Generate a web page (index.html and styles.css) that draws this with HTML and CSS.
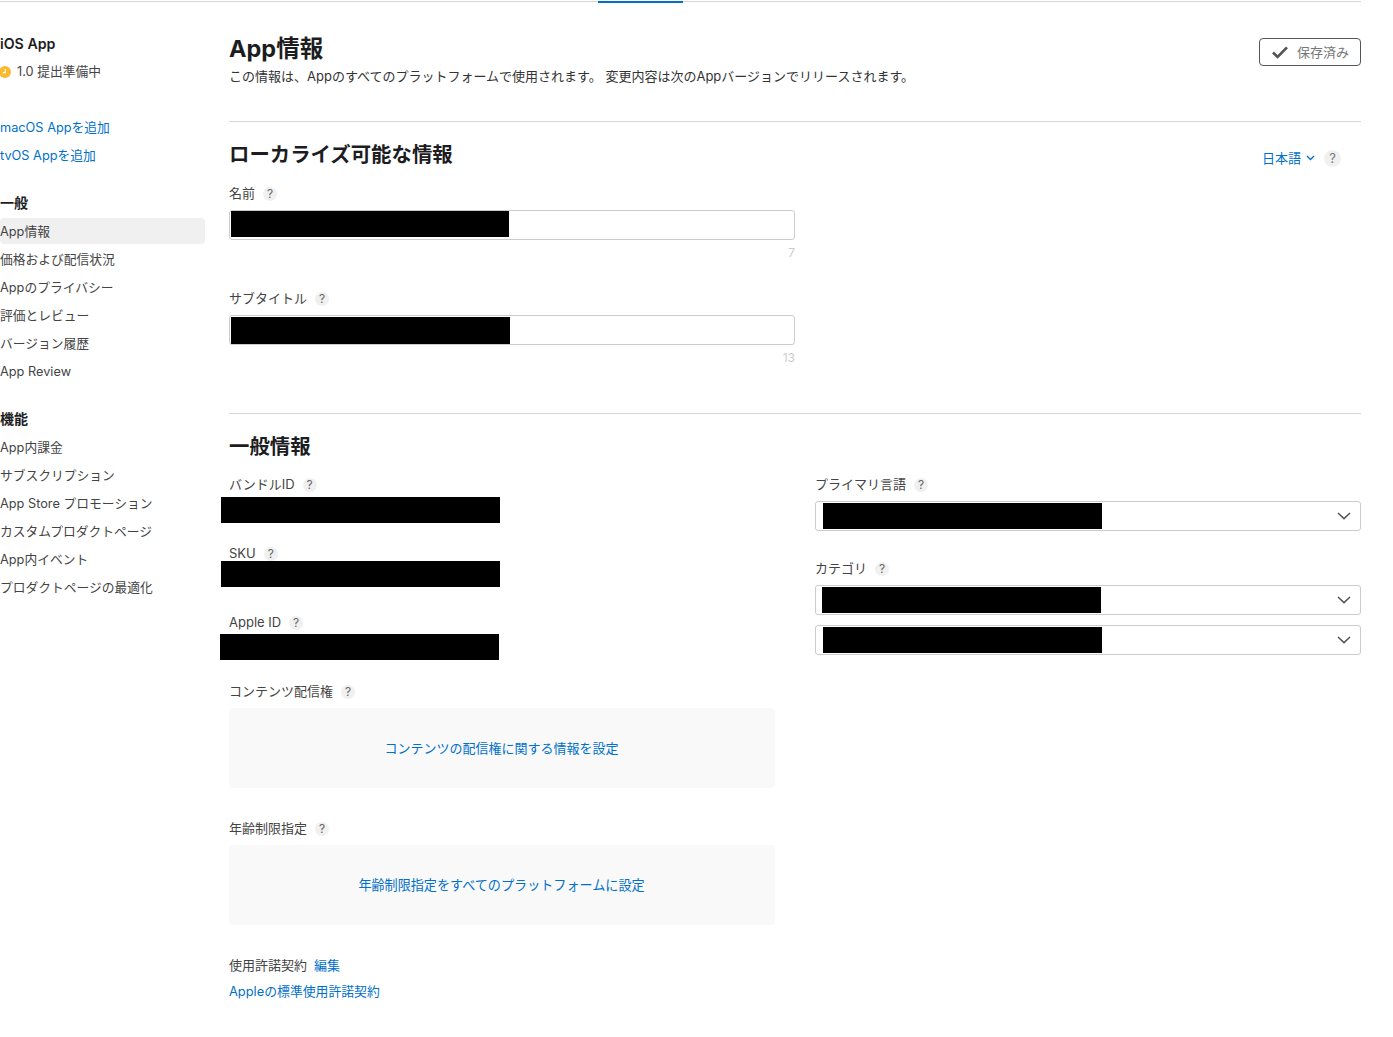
FILE: index.html
```html
<!DOCTYPE html>
<html lang="ja">
<head>
<meta charset="utf-8">
<title>App情報</title>
<link rel="stylesheet" href="styles.css">
</head>
<body>
<div class="topbar"><span class="tab-active"></span></div>
<div class="page">
  <aside class="sidebar">
    <div class="app-title">iOS App</div>
    <div class="app-status">
      <svg class="status-icon" width="12" height="12" viewBox="0 0 11 11"><circle cx="5.5" cy="5.5" r="5.5" fill="#fdb92e"/><path d="M5.8 2.8v3.2H3.4" fill="none" stroke="#fff" stroke-width="1.1"/></svg>
      <span>1.0 提出準備中</span>
    </div>
    <a class="side-add first" href="#">macOS Appを追加</a>
    <a class="side-add" href="#">tvOS Appを追加</a>
    <div class="side-head">一般</div>
    <a class="side-item active" href="#">App情報</a>
    <a class="side-item" href="#">価格および配信状況</a>
    <a class="side-item" href="#">Appのプライバシー</a>
    <a class="side-item" href="#">評価とレビュー</a>
    <a class="side-item" href="#">バージョン履歴</a>
    <a class="side-item" href="#">App Review</a>
    <div class="side-head next">機能</div>
    <a class="side-item" href="#">App内課金</a>
    <a class="side-item" href="#">サブスクリプション</a>
    <a class="side-item" href="#">App Store プロモーション</a>
    <a class="side-item" href="#">カスタムプロダクトページ</a>
    <a class="side-item" href="#">App内イベント</a>
    <a class="side-item" href="#">プロダクトページの最適化</a>
  </aside>
  <main class="main">
    <header class="page-head">
      <div>
        <h1>App情報</h1>
        <p class="desc">この情報は、Appのすべてのプラットフォームで使用されます。 変更内容は次のAppバージョンでリリースされます。</p>
      </div>
      <button class="saved">
        <svg width="18" height="14" viewBox="0 0 18 14"><path d="M2 7.5l4.6 4.4L16 2.4" fill="none" stroke="#555" stroke-width="2.7"/></svg>
        <span>保存済み</span>
      </button>
    </header>

    <section class="localized">
      <div class="section-head">
        <h2>ローカライズ可能な情報</h2>
        <div class="lang">
          <a href="#" class="lang-link">日本語</a>
          <svg width="9" height="6" viewBox="0 0 9 6"><path d="M1 1l3.5 3.5L8 1" fill="none" stroke="#0070c9" stroke-width="1.3"/></svg>
          <span class="help big">?</span>
        </div>
      </div>
      <div class="label name-label">名前<span class="help">?</span></div>
      <div class="input"><span class="mask mask-name"></span></div>
      <div class="count">7</div>
      <div class="label sub-label">サブタイトル<span class="help">?</span></div>
      <div class="input"><span class="mask mask-sub"></span></div>
      <div class="count">13</div>
    </section>

    <section class="general">
      <h2>一般情報</h2>
      <div class="columns">
        <div class="col-left">
          <div class="label">バンドルID<span class="help">?</span></div>
          <div class="block block-bundle"></div>
          <div class="label sku-label">SKU<span class="help">?</span></div>
          <div class="block block-sku"></div>
          <div class="label appleid-label">Apple ID<span class="help">?</span></div>
          <div class="block block-apple"></div>
          <div class="label rights-label">コンテンツ配信権<span class="help">?</span></div>
          <div class="panel"><a href="#" class="rights-link">コンテンツの配信権に関する情報を設定</a></div>
          <div class="label age-label">年齢制限指定<span class="help">?</span></div>
          <div class="panel"><a href="#" class="age-link">年齢制限指定をすべてのプラットフォームに設定</a></div>
          <div class="label license-label">使用許諾契約<a href="#" class="edit">編集</a></div>
          <a href="#" class="license-link">Appleの標準使用許諾契約</a>
        </div>
        <div class="col-right">
          <div class="label">プライマリ言語<span class="help">?</span></div>
          <div class="select"><span class="mask mask-lang"></span>
            <svg class="chev" width="14" height="8" viewBox="0 0 14 8"><path d="M1 1l6 5.6L13 1" fill="none" stroke="#555" stroke-width="1.5"/></svg>
          </div>
          <div class="label cat-label">カテゴリ<span class="help">?</span></div>
          <div class="select"><span class="mask mask-cat1"></span>
            <svg class="chev" width="14" height="8" viewBox="0 0 14 8"><path d="M1 1l6 5.6L13 1" fill="none" stroke="#555" stroke-width="1.5"/></svg>
          </div>
          <div class="select second"><span class="mask mask-cat2"></span>
            <svg class="chev" width="14" height="8" viewBox="0 0 14 8"><path d="M1 1l6 5.6L13 1" fill="none" stroke="#555" stroke-width="1.5"/></svg>
          </div>
        </div>
      </div>
    </section>
  </main>
</div>
</body>
</html>
```
FILE: styles.css
```css
* { box-sizing: border-box; }
html, body { margin: 0; padding: 0; background: #fff; }
body {
  height: 1037px;
  overflow: hidden;
  font-family: Inter, "Noto Sans CJK JP", "Liberation Sans", sans-serif;
  font-size: 13px;
  line-height: 18px;
  color: #333;
}
a { color: #0070c9; text-decoration: none; }

.topbar { width: 1361px; height: 1px; margin-top: 1px; background: #d6d6d6; display: flex; justify-content: flex-start; }
.tab-active { display: block; width: 85px; height: 2px; margin-left: 598px; background: #0070c9; }

.page { display: flex; align-items: flex-start; width: 1361px; }

.sidebar { width: 205px; margin-right: 24px; flex: none; padding-top: 33px; font-size: 12.75px; }
.app-title { font-size: 14.2px; font-weight: 600; line-height: 18px; color: #1d1d1f; }
.app-status { display: flex; align-items: center; gap: 6px; margin-top: 10px; color: #444; }
.status-icon { flex: none; margin-left: -1px; }
.side-add { display: block; height: 18px; margin-top: 10px; }
.side-add.first { margin-top: 38px; }
.side-head { font-size: 14px; font-weight: 700; line-height: 18px; color: #1d1d1f; margin-top: 29px; margin-bottom: 6px; }
.side-head.next { margin-top: 26px; }
.side-item { display: block; height: 26px; line-height: 27px; margin-bottom: 2px; color: #444; border-radius: 4px; }
.side-item.active { background: #f0f0f0; }

.main { flex: 1; min-width: 0; padding-top: 32px; }
.page-head { display: flex; justify-content: space-between; align-items: flex-start; height: 88px; border-bottom: 1px solid #d6d6d6; }
h1 { margin: 0; font-size: 23.5px; line-height: 30px; font-weight: 700; color: #1d1d1f; }
.desc { margin: 3px 0 0; color: #333; }
.saved {
  display: flex; align-items: center; gap: 8px;
  width: 102px; height: 28px; margin-top: 4px; padding: 0 0 0 11px;
  background: #fff; border: 1px solid #555; border-radius: 4px;
  font: inherit; color: #777;
}

.localized { height: 292px; border-bottom: 1px solid #d6d6d6; padding-top: 18px; }
.section-head { display: flex; justify-content: space-between; align-items: flex-start; }
h2 { margin: 0; font-size: 20.4px; line-height: 30px; font-weight: 700; color: #1d1d1f; }
.lang { display: flex; align-items: center; gap: 4px; margin-top: 8px; padding-right: 20px; height: 20px; }
.lang-link { margin-right: 1px; }
.label { display: flex; align-items: center; height: 18px; color: #444; }
.name-label { margin-top: 14px; }
.sub-label { margin-top: 28px; }
.help {
  display: inline-flex; align-items: center; justify-content: center;
  width: 14px; height: 14px; margin: 1px 0 0 8px; border-radius: 50%;
  background: #f0f0f0; color: #666; font-size: 12px; line-height: 14px;
}
.help.big { width: 17px; height: 17px; margin: 0 0 0 5px; font-size: 13px; color: #777; }

.input, .select {
  display: flex; align-items: center;
  height: 30px; border: 1px solid #ccc; border-radius: 3px; background: #fff;
}
.input { width: 566px; margin-top: 8px; }
.count { width: 566px; margin-top: 5px; text-align: right; font-size: 12px; line-height: 16px; color: #ccc; }
.mask { display: block; height: 26px; background: #000; flex: none; }
.mask-name { width: 278px; margin: 0 0 2px 1px; }
.mask-sub { width: 279px; margin-left: 1px; height: 27px; }
.mask-lang { width: 279px; margin-left: 7px; height: 26px; }
.mask-cat1 { width: 279px; margin-left: 6px; height: 26px; }
.mask-cat2 { width: 279px; margin-left: 7px; height: 26px; }

.general { padding-top: 18px; }
.columns { display: flex; margin-top: 9px; }
.col-left { width: 586px; flex: none; padding-top: 4px; }
.col-right { flex: 1; padding-top: 4px; }
.block { width: 279px; height: 26px; margin-left: -8px; background: #000; }
.block-bundle { margin-top: 4px; }
.sku-label { margin-top: 21px; }
.block-sku { margin-top: -1px; }
.appleid-label { margin-top: 26px; }
.block-apple { margin-top: 3px; margin-left: -9px; }
.rights-label { margin-top: 22px; }
.panel { display: flex; justify-content: center; align-items: center; width: 546px; height: 80px; margin-top: 8px; padding-bottom: 1px; background: #f9f9f9; border-radius: 4px; }
.rights-link { margin-left: -1px; }
.age-link { margin-left: -1px; font-size: 13.1px; }
.age-label { margin-top: 31px; }
.license-label { margin-top: 31px; }
.edit { margin-left: 7px; }
.license-link { display: block; margin-top: 9px; font-size: 12.85px; }

.select { width: 546px; margin-top: 8px; justify-content: space-between; padding-right: 9px; }
.chev { flex: none; }
.cat-label { margin-top: 28px; }
.select.second { margin-top: 10px; }
```
